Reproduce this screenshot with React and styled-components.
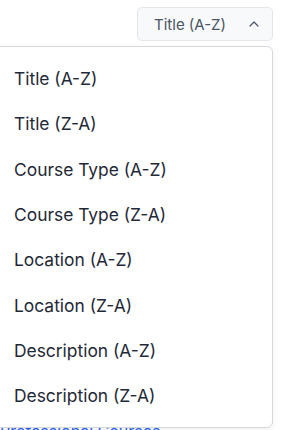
import React, { useState } from 'react'
import styled, { createGlobalStyle } from 'styled-components'

const GlobalStyle = createGlobalStyle`
  body {
    margin: 0;
    background: #ffffff;
    font-family: Inter, "Noto Sans", sans-serif;
    overflow: hidden;
  }
`

const Page = styled.div`
  position: relative;
  width: 281px;
  height: 430px;
  overflow: hidden;
`

const Toolbar = styled.div`
  display: flex;
  justify-content: flex-end;
  padding: 7px 8px 0 0;
`

const SortButton = styled.button`
  display: flex;
  align-items: center;
  gap: 22px;
  height: 34px;
  padding: 0 12px 0 16px;
  background: #f8f9fb;
  border: 1px solid #e3e6ea;
  border-radius: 5px;
  font-family: Inter, sans-serif;
  font-size: 15px;
  color: #4b5563;
  cursor: pointer;
`

const Content = styled.div`
  padding: 380px 0 0 0;
`

const Link = styled.a`
  font-family: Inter, sans-serif;
  font-size: 16px;
  color: #2563eb;
  text-decoration: underline;
`

const Menu = styled.ul`
  position: absolute;
  top: 46px;
  left: -12px;
  right: 8px;
  margin: 0;
  padding: 9px 0;
  list-style: none;
  background: #ffffff;
  border: 1px solid #d6d8de;
  border-radius: 6px;
  box-shadow: 0 2px 6px rgba(0, 0, 0, 0.06);
  z-index: 10;
`

const MenuItem = styled.li`
  display: flex;
  align-items: center;
  height: 45.3px;
  padding-left: 25px;
  font-size: 17.4px;
  color: #1f2937;
  cursor: pointer;
`

const options = [
  'Title (A-Z)',
  'Title (Z-A)',
  'Course Type (A-Z)',
  'Course Type (Z-A)',
  'Location (A-Z)',
  'Location (Z-A)',
  'Description (A-Z)',
  'Description (Z-A)'
]

const App = () => {
  const [selected, setSelected] = useState(options[0])
  const [open, setOpen] = useState(true)

  return (
    <Page>
      <GlobalStyle />
      <Toolbar>
        <SortButton onClick={() => setOpen(!open)}>
          {selected}
          <svg width="12" height="12" viewBox="0 0 12 12" fill="none" stroke="#4b5563" strokeWidth="1.2" strokeLinecap="round" strokeLinejoin="round">
            <path d={open ? 'M2 8l4-4 4 4' : 'M2 4l4 4 4-4'} />
          </svg>
        </SortButton>
      </Toolbar>
      <Content>
        <Link>Professional Courses</Link>
      </Content>
      {open && (
        <Menu>
          {options.map(option => (
            <MenuItem key={option} onClick={() => { setSelected(option); setOpen(false) }}>
              {option}
            </MenuItem>
          ))}
        </Menu>
      )}
    </Page>
  )
}

export default App
